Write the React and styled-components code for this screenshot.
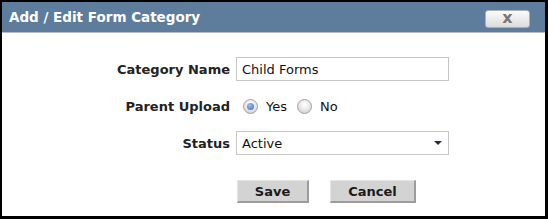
import React from 'react';
import styled, { createGlobalStyle } from 'styled-components';

const Global = createGlobalStyle`
    html, body {
        margin: 0;
        padding: 0;
        background: #000;
    }
    body {
        font-family: "DejaVu Sans", Verdana, sans-serif;
        font-size: 13px;
    }
`;

const Dialog = styled.div`
    width: 543px;
    height: 214px;
    margin: 2px 3px 3px 2px;
    background: #fff;
    display: flex;
    flex-direction: column;
`;

const TitleBar = styled.div`
    height: 30px;
    background: #5e7d9c;
    border-bottom: 1px solid #b4bcc6;
    display: flex;
    align-items: center;
    justify-content: space-between;
    padding: 0 15px 0 7px;
`;

const Title = styled.span`
    color: #fff;
    font-weight: bold;
    font-size: 13.5px;
`;

const CloseButton = styled.button`
    width: 45px;
    height: 18px;
    margin-top: 4px;
    padding: 0 0 2px;
    border: 1px solid #a9b0b8;
    border-radius: 3px;
    background: linear-gradient(#fbfbfb, #dcdcdc);
    color: #777;
    font-family: "DejaVu Sans", sans-serif;
    font-weight: bold;
    font-size: 16px;
    line-height: 14px;
    display: flex;
    align-items: center;
    justify-content: center;
`;

const Form = styled.div`
    display: grid;
    grid-template-columns: 228px 213px;
    grid-auto-rows: 24px;
    column-gap: 6px;
    row-gap: 13px;
    padding-top: 24px;
`;

const Label = styled.label`
    font-weight: bold;
    color: #222;
    text-align: right;
    align-self: center;
`;

const TextInput = styled.input`
    box-sizing: border-box;
    width: 213px;
    height: 24px;
    border: 1px solid #c6c6c6;
    padding: 0 5px;
    font-family: "DejaVu Sans", sans-serif;
    font-size: 13px;
    color: #111;
    outline: none;
`;

const RadioGroup = styled.div`
    display: flex;
    align-items: center;
    padding-left: 7px;
    color: #111;
`;

const RadioOption = styled.span`
    display: flex;
    align-items: center;
    margin-right: 10px;
`;

const RadioCircle = styled.span`
    box-sizing: border-box;
    width: 15px;
    height: 15px;
    border-radius: 50%;
    border: 1px solid #a2a2a2;
    background: radial-gradient(circle at 50% 35%, #ffffff 0%, #e6e6e6 55%, #c0c0c0 100%);
    margin-right: 8px;
    display: flex;
    align-items: center;
    justify-content: center;
    &::after {
        content: "";
        display: ${props => (props.checked ? 'block' : 'none')};
        width: 7px;
        height: 7px;
        border-radius: 50%;
        background: radial-gradient(circle at 40% 35%, #a6bef2, #3b62c8);
    }
`;

const Select = styled.div`
    box-sizing: border-box;
    width: 213px;
    height: 24px;
    border: 1px solid #c6c6c6;
    padding: 0 6px 0 5px;
    display: flex;
    align-items: center;
    justify-content: space-between;
    color: #111;
`;

const Arrow = styled.span`
    width: 0;
    height: 0;
    border-left: 4px solid transparent;
    border-right: 4px solid transparent;
    border-top: 4px solid #2a2a3a;
`;

const Buttons = styled.div`
    grid-column: 2;
    display: flex;
    gap: 21px;
    margin-top: 12px;
    padding-left: 1px;
`;

const Button = styled.button`
    box-sizing: border-box;
    width: ${props => props.w}px;
    height: 23px;
    padding: 0;
    background: #d3d3d3;
    border-style: solid;
    border-width: 1px 2px 2px 1px;
    border-color: #e4e4e4 #9c9c9c #9c9c9c #e4e4e4;
    font-family: "DejaVu Sans", sans-serif;
    font-weight: bold;
    font-size: 13px;
    color: #1a1a1a;
`;

export default function App() {
    return (
        <>
            <Global />
            <Dialog>
                <TitleBar>
                    <Title>Add / Edit Form Category</Title>
                    <CloseButton>x</CloseButton>
                </TitleBar>
                <Form>
                    <Label>Category Name</Label>
                    <TextInput defaultValue="Child Forms" />

                    <Label>Parent Upload</Label>
                    <RadioGroup>
                        <RadioOption>
                            <RadioCircle checked />
                            Yes
                        </RadioOption>
                        <RadioOption>
                            <RadioCircle />
                            No
                        </RadioOption>
                    </RadioGroup>

                    <Label>Status</Label>
                    <Select>
                        Active
                        <Arrow />
                    </Select>

                    <Buttons>
                        <Button w={72}>Save</Button>
                        <Button w={86}>Cancel</Button>
                    </Buttons>
                </Form>
            </Dialog>
        </>
    );
}
